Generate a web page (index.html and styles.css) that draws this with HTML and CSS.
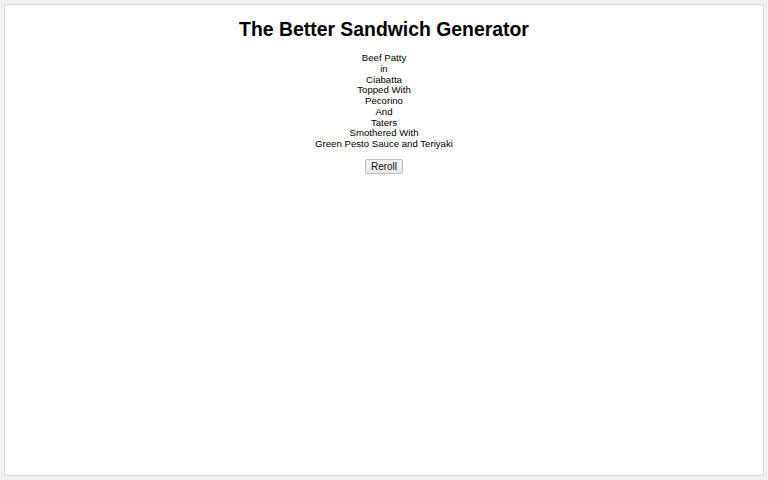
FILE: index.html
```html
<!DOCTYPE html>
<html lang="en">
<head>
    <meta charset="UTF-8">
    <meta name="viewport" content="width=device-width, initial-scale=1">
    <title>The Better Sandwich Generator</title>
    <link rel="stylesheet" href="styles.css">
</head>
<body>
    <div class="frame">
        <h1 class="title">The Better Sandwich Generator</h1>
        <div class="sandwich" id="sandwich">
            <p>Beef Patty</p>
            <p>in</p>
            <p>Ciabatta</p>
            <p>Topped With</p>
            <p>Pecorino</p>
            <p>And</p>
            <p>Taters</p>
            <p>Smothered With</p>
            <p>Green Pesto Sauce and Teriyaki</p>
        </div>
        <button class="reroll" id="reroll">Reroll</button>
    </div>
</body>
</html>
```
FILE: styles.css
```css
*{
    margin:0;
    padding:0;
}
html,body{
    height:100%;
}
body{
    background:#f1f1f1;
    padding:4px;
    box-sizing:border-box;
    font-family:"Liberation Sans", Arial, sans-serif;
    color:#000;
}
.frame{
    height:100%;
    background:#fff;
    border:1px solid #dcdcdc;
    box-sizing:border-box;
    display:flex;
    flex-direction:column;
    align-items:center;
}
.title{
    font-size:19.4px;
    font-weight:bold;
    line-height:24px;
    margin-top:12px;
}
.sandwich{
    margin-top:12px;
    text-align:center;
    font-size:9.65px;
    line-height:10.75px;
}
.reroll{
    margin-top:9px;
    font-family:"Liberation Sans", Arial, sans-serif;
    font-size:10px;
    padding:1px 5px;
    height:15px;
    border:1px solid #bdbdbd;
    border-radius:2px;
    background:linear-gradient(#f6f6f6,#e6e6e6);
    color:#111;
}
```
